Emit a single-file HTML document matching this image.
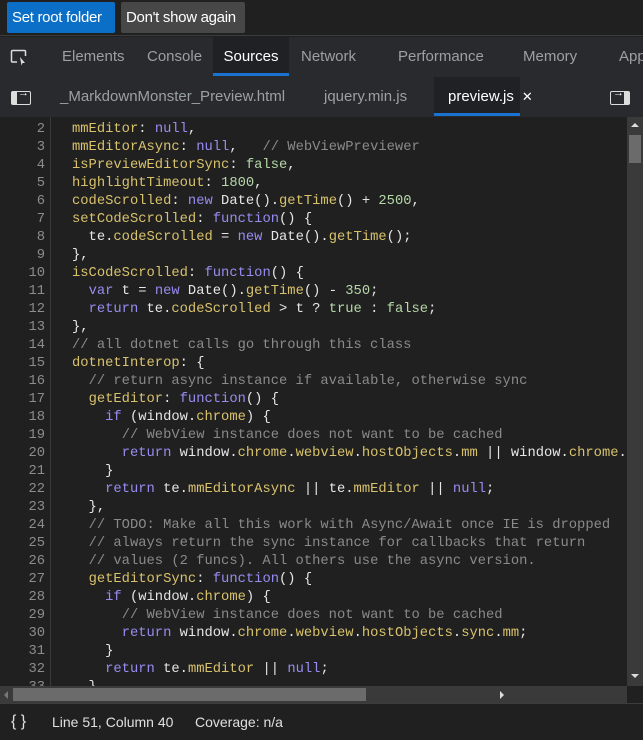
<!DOCTYPE html>
<html><head><meta charset="utf-8"><style>
*{margin:0;padding:0;box-sizing:border-box}
body{width:643px;height:734px;overflow:hidden;background:#202020;font-family:"Liberation Sans",sans-serif;color:#ccc;position:relative}
.top{position:absolute;left:0;top:0;width:643px;height:36px;background:#202020;border-bottom:1px solid #3c3c3c}
.btn{position:absolute;top:2px;height:31px;line-height:31px;font-size:15px;color:#fff;padding:0 5px;border-radius:2px;white-space:nowrap;letter-spacing:-0.3px}
.tabs{position:absolute;left:0;top:37px;width:643px;height:40px;background:#292a2d}
.tab{position:absolute;top:0;height:40px;line-height:40px;font-size:15px;color:#9aa0a6;white-space:nowrap}
.ftabs{position:absolute;left:0;top:77px;width:643px;height:40px;background:#292a2d}
.code{position:absolute;left:0;top:117px;width:627px;height:569px;background:#202020;overflow:hidden}
.gut{position:absolute;left:0;top:0;width:51px;height:569px;border-right:1px solid #3a3a3a}
.ln{position:absolute;left:0;width:45px;text-align:right;font:13.8px/18px "Liberation Mono",monospace;color:#8c8c8c}
.l{position:absolute;left:72px;white-space:pre;font:13.8px/18px "Liberation Mono",monospace;color:#e6e6e6}
.p{color:#d8c26c}.k{color:#978cf0}.c{color:#8a8a8a}.g{color:#b6d7a8}
</style></head><body>
<div class="top">
<div class="btn" style="left:7px;background:#0b6fc7;width:108px">Set root folder</div>
<div class="btn" style="left:121px;background:#474747;width:124px">Don't show again</div>
</div>
<div class="tabs">
<svg style="position:absolute;left:10px;top:12px" width="18" height="17" viewBox="0 0 18 17"><path d="M7 13H2.5a1 1 0 0 1-1-1V2.5a1 1 0 0 1 1-1h12a1 1 0 0 1 1 1V7" fill="none" stroke="#ddd" stroke-width="1.5"/><path d="M10 8l5 6-2.5 0-1 2.5z" fill="#ddd"/></svg>
<div class="tab" style="left:62px">Elements</div>
<div class="tab" style="left:147px">Console</div>
<div class="tab" style="left:213px;width:76px;background:#202124;color:#fff;text-align:center;border-bottom:3px solid #1a73d0;height:39px">Sources</div>
<div class="tab" style="left:301px">Network</div>
<div class="tab" style="left:398px">Performance</div>
<div class="tab" style="left:523px">Memory</div>
<div class="tab" style="left:619px">App</div>
</div>
<div class="ftabs">
<div style="position:absolute;left:11px;top:14px;width:20px;height:14px;border:1.5px solid #ddd;border-radius:2px;background:linear-gradient(90deg,#ddd 0 5px,transparent 5px)"><span style="position:absolute;left:6px;top:-5px;font-size:11px;color:#fff">→</span></div>
<div class="tab" style="left:60px">_MarkdownMonster_Preview.html</div>
<div class="tab" style="left:324px">jquery.min.js</div>
<div class="tab" style="left:434px;width:86px;background:#202124;color:#fff;border-bottom:3px solid #1a73d0;height:39px;padding-left:14px">preview.js<span style="font-size:13px;margin-left:8px">✕</span></div>
<div style="position:absolute;left:610px;top:14px;width:20px;height:14px;border:1.5px solid #ddd;border-radius:2px;background:linear-gradient(90deg,transparent 13px,#ddd 13px)"><span style="position:absolute;left:2px;top:-5px;font-size:11px;color:#fff">→</span></div>
</div>
<div class="code">
<div class="gut"></div>
<div class="ln" style="top:-14px">1</div>
<div class="l" style="top:-14px"><span class="k">var</span> te <span style="color:#d8c26c">= window.previewer = {</span></div>
<div class="ln" style="top:4px">2</div><div class="l" style="top:4px"><span class="p">mmEditor</span>: <span class="k">null</span>,</div>
<div class="ln" style="top:22px">3</div><div class="l" style="top:22px"><span class="p">mmEditorAsync</span>: <span class="k">null</span>,   <span class="c">// WebViewPreviewer</span></div>
<div class="ln" style="top:40px">4</div><div class="l" style="top:40px"><span class="p">isPreviewEditorSync</span>: <span class="g">false</span>,</div>
<div class="ln" style="top:58px">5</div><div class="l" style="top:58px"><span class="p">highlightTimeout</span>: <span class="g">1800</span>,</div>
<div class="ln" style="top:76px">6</div><div class="l" style="top:76px"><span class="p">codeScrolled</span>: <span class="k">new</span> Date().<span class="p">getTime</span>() + <span class="g">2500</span>,</div>
<div class="ln" style="top:94px">7</div><div class="l" style="top:94px"><span class="p">setCodeScrolled</span>: <span class="k">function</span>() {</div>
<div class="ln" style="top:112px">8</div><div class="l" style="top:112px">  te.<span class="p">codeScrolled</span> = <span class="k">new</span> Date().<span class="p">getTime</span>();</div>
<div class="ln" style="top:130px">9</div><div class="l" style="top:130px">},</div>
<div class="ln" style="top:148px">10</div><div class="l" style="top:148px"><span class="p">isCodeScrolled</span>: <span class="k">function</span>() {</div>
<div class="ln" style="top:166px">11</div><div class="l" style="top:166px">  <span class="k">var</span> t = <span class="k">new</span> Date().<span class="p">getTime</span>() - <span class="g">350</span>;</div>
<div class="ln" style="top:184px">12</div><div class="l" style="top:184px">  <span class="k">return</span> te.<span class="p">codeScrolled</span> &gt; t ? <span class="g">true</span> : <span class="g">false</span>;</div>
<div class="ln" style="top:202px">13</div><div class="l" style="top:202px">},</div>
<div class="ln" style="top:220px">14</div><div class="l" style="top:220px"><span class="c">// all dotnet calls go through this class</span></div>
<div class="ln" style="top:238px">15</div><div class="l" style="top:238px"><span class="p">dotnetInterop</span>: {</div>
<div class="ln" style="top:256px">16</div><div class="l" style="top:256px">  <span class="c">// return async instance if available, otherwise sync</span></div>
<div class="ln" style="top:274px">17</div><div class="l" style="top:274px">  <span class="p">getEditor</span>: <span class="k">function</span>() {</div>
<div class="ln" style="top:292px">18</div><div class="l" style="top:292px">    <span class="k">if</span> (window.<span class="p">chrome</span>) {</div>
<div class="ln" style="top:310px">19</div><div class="l" style="top:310px">      <span class="c">// WebView instance does not want to be cached</span></div>
<div class="ln" style="top:328px">20</div><div class="l" style="top:328px">      <span class="k">return</span> window.<span class="p">chrome</span>.<span class="p">webview</span>.<span class="p">hostObjects</span>.<span class="p">mm</span> || window.<span class="p">chrome</span>.<span class="p">webview</span></div>
<div class="ln" style="top:346px">21</div><div class="l" style="top:346px">    }</div>
<div class="ln" style="top:364px">22</div><div class="l" style="top:364px">    <span class="k">return</span> te.<span class="p">mmEditorAsync</span> || te.<span class="p">mmEditor</span> || <span class="k">null</span>;</div>
<div class="ln" style="top:382px">23</div><div class="l" style="top:382px">  },</div>
<div class="ln" style="top:400px">24</div><div class="l" style="top:400px">  <span class="c">// TODO: Make all this work with Async/Await once IE is dropped</span></div>
<div class="ln" style="top:418px">25</div><div class="l" style="top:418px">  <span class="c">// always return the sync instance for callbacks that return</span></div>
<div class="ln" style="top:436px">26</div><div class="l" style="top:436px">  <span class="c">// values (2 funcs). All others use the async version.</span></div>
<div class="ln" style="top:454px">27</div><div class="l" style="top:454px">  <span class="p">getEditorSync</span>: <span class="k">function</span>() {</div>
<div class="ln" style="top:472px">28</div><div class="l" style="top:472px">    <span class="k">if</span> (window.<span class="p">chrome</span>) {</div>
<div class="ln" style="top:490px">29</div><div class="l" style="top:490px">      <span class="c">// WebView instance does not want to be cached</span></div>
<div class="ln" style="top:508px">30</div><div class="l" style="top:508px">      <span class="k">return</span> window.<span class="p">chrome</span>.<span class="p">webview</span>.<span class="p">hostObjects</span>.<span class="p">sync</span>.<span class="p">mm</span>;</div>
<div class="ln" style="top:526px">31</div><div class="l" style="top:526px">    }</div>
<div class="ln" style="top:544px">32</div><div class="l" style="top:544px">    <span class="k">return</span> te.<span class="p">mmEditor</span> || <span class="k">null</span>;</div>
<div class="ln" style="top:562px">33</div><div class="l" style="top:562px">  },</div>
</div>
<div style="position:absolute;left:627px;top:117px;width:16px;height:569px;background:#3a3a3a">
<div style="position:absolute;left:4px;top:6px;width:0;height:0;border-left:4px solid transparent;border-right:4px solid transparent;border-bottom:4px solid #ddd"></div>
<div style="position:absolute;left:2px;top:18px;width:12px;height:28px;background:#6b6b6b"></div>
<div style="position:absolute;left:4px;top:557px;width:0;height:0;border-left:4px solid transparent;border-right:4px solid transparent;border-top:4px solid #ddd"></div>
</div>
<div style="position:absolute;left:0;top:686px;width:627px;height:17px;background:#3a3a3a">
<div style="position:absolute;left:4px;top:5px;border-top:4px solid transparent;border-bottom:4px solid transparent;border-right:4px solid #777"></div>
<div style="position:absolute;left:13px;top:2px;width:353px;height:13px;background:#6b6b6b"></div>
<div style="position:absolute;left:500px;top:5px;border-top:4px solid transparent;border-bottom:4px solid transparent;border-left:4px solid #ddd"></div>
</div>
<div style="position:absolute;left:0;top:703px;width:643px;height:1px;background:#3c3c3c"></div>
<div style="position:absolute;left:0;top:704px;width:643px;height:30px;background:#202020;font-size:14px;color:#e0e0e0;line-height:36px">
<span style="position:absolute;left:11px;font-size:16px">{ }</span>
<span style="position:absolute;left:52px">Line 51, Column 40</span>
<span style="position:absolute;left:195px">Coverage: n/a</span>
</div>
</body></html>
